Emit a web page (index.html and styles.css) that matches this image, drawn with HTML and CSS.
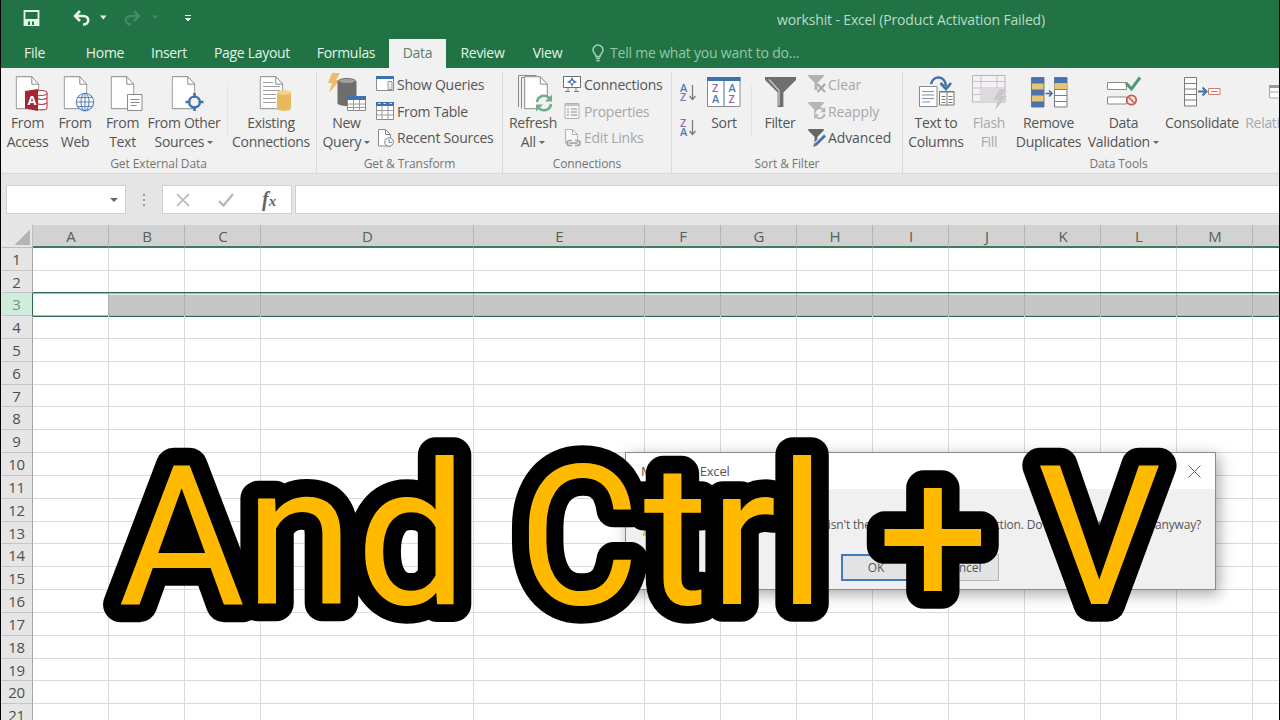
FILE: index.html
```html
<!DOCTYPE html>
<html lang="en">
<head>
    <meta charset="UTF-8">
    <meta name="viewport" content="width=device-width, initial-scale=1.0">
    <title>workshit - Excel</title>
    <link rel="stylesheet" href="styles.css">
</head>
<body>
    <svg class="defs" width="0" height="0">
        <symbol id="page" viewBox="0 0 24 34">
            <path d="M.7.7h15.6l7 7.5v24.500H.7z" fill="#fff" stroke="#8a8a8a"/>
            <path d="M16.300.7v7.500h7" fill="none" stroke="#8a8a8a"/>
        </symbol>
        <symbol id="funnel" viewBox="0 0 32 31">
            <path d="M0 0h32v3L19 16v15h-6V16L0 3z"/>
        </symbol>
        <symbol id="cycle" viewBox="0 0 18 18">
            <path d="M2 8a7 7 0 0 1 12.500-3.500M16 10a7 7 0 0 1-12.500 3.500" fill="none" stroke="currentColor" stroke-width="2.600"/>
            <path d="M17 .5v7h-7zM1 17.500v-7h7z" fill="currentColor"/>
        </symbol>
    </svg>

    <div class="app">
        <div class="titlebar">
            <svg class="quick" width="200" height="38" viewBox="0 0 200 38">
                <path d="M24.500 11h14v14h-14z" fill="none" stroke="#e9f5ec" stroke-width="1.800"/>
                <path d="M25 19h13v6H25z" fill="#e9f5ec"/>
                <path d="M28 21.500h2v3.500h-2zM32 21.500h2v3.500h-2z" fill="#217346"/>
                <path d="M75 16h8c7 0 7 8.500 0 8.500" fill="none" stroke="#e9f5ec" stroke-width="2.600"/>
                <path d="M80 11l-5 5 5 5" fill="none" stroke="#e9f5ec" stroke-width="2.600"/>
                <path d="M100 15.500h6.500l-3.200 4z" fill="#e9f5ec"/>
                <path d="M139 16h-8c-7 0-7 8.500 0 8.500M134 11l5 5-5 5" fill="none" stroke="#448b63" stroke-width="2.400"/>
                <path d="M152 15.500h6l-3 3.500z" fill="#448b63"/>
                <path d="M185 15.500h6M185.500 18.500h5l-2.500 2.500z" fill="#e9f5ec" stroke="#e9f5ec"/>
            </svg>
            <span class="doc-title">workshit - Excel (Product Activation Failed)</span>
        </div>

        <div class="tabs">
            <div class="tab file">File</div>
            <div class="tab home">Home</div>
            <div class="tab insert">Insert</div>
            <div class="tab layout">Page Layout</div>
            <div class="tab formulas">Formulas</div>
            <div class="tab data active">Data</div>
            <div class="tab review">Review</div>
            <div class="tab view">View</div>
            <div class="tell">
                <svg width="12" height="18" viewBox="0 0 12 18" fill="none" stroke="#a5d3b5" stroke-width="1.500">
                    <path d="M4 12.500c0-2.500-3-3.500-3-6.500a5 5 0 0 1 10 0c0 3-3 4-3 6.500zM4 14.500h4M4.500 16.800h3"/>
                </svg>
                <span>Tell me what you want to do...</span>
            </div>
        </div>

        <div class="ribbon">
            <div class="group external">
                <div class="tools">
                    <div class="big access">
                        <svg viewBox="0 0 40 40">
                            <use href="#page" x="7.500" y="4" width="24" height="34"/>
                            <g fill="#fff" stroke="#b7404a" stroke-width="1.100">
                                <path d="M27 21v15c2 2.500 12 2.500 12 0V21"/>
                                <ellipse cx="33" cy="21" rx="6" ry="2.500"/>
                                <path d="M28 26c3 2 8 2 11 0M28 31c3 2 8 2 11 0" fill="none"/>
                            </g>
                            <path d="M17 19l13-2v22l-13-2.500z" fill="#a4262f"/>
                            <text x="19.500" y="32.500" class="access-letter">A</text>
                        </svg>
                        <span>From<br>Access</span>
                    </div>
                    <div class="big web">
                        <svg viewBox="0 0 40 40">
                            <use href="#page" x="8.500" y="4" width="24" height="34"/>
                            <g fill="none" stroke="#5b86b8" stroke-width="1.100">
                                <circle cx="30" cy="30" r="8.700" fill="#fff"/>
                                <ellipse cx="30" cy="30" rx="4" ry="8.700"/>
                                <path d="M21.500 30h17M30 21.500v17M23 25.500h14M23 34.500h14"/>
                            </g>
                        </svg>
                        <span>From<br>Web</span>
                    </div>
                    <div class="big text">
                        <svg viewBox="0 0 40 40">
                            <use href="#page" x="7.500" y="4" width="24" height="34"/>
                            <path d="M24.500 22.500h14.500v16H24.500z" fill="#fff" stroke="#8a8a8a"/>
                            <path d="M27.500 27.500h9M27.500 30.500h9M27.500 33.500h6" stroke="#8a8a8a"/>
                        </svg>
                        <span>From<br>Text</span>
                    </div>
                    <div class="big other">
                        <svg viewBox="0 0 40 40">
                            <use href="#page" x="7.500" y="4" width="24" height="34"/>
                            <circle cx="30.500" cy="30" r="5.500" fill="#f1f1f1" stroke="#3f72ad" stroke-width="2.200"/>
                            <path d="M30.500 21v5M30.500 34v5M21.500 30h5M34.500 30h5" stroke="#3f72ad" stroke-width="2.600"/>
                        </svg>
                        <span>From Other<br>Sources <i class="caret"></i></span>
                    </div>
                    <div class="split"></div>
                    <div class="big existing">
                        <svg viewBox="0 0 40 40">
                            <use href="#page" x="8.500" y="4" width="24" height="34"/>
                            <path d="M12 10.500h10M12 14.500h17M12 18.500h17M12 22.500h13M12 26.500h13M12 30.500h13" stroke="#a0a0a0"/>
                            <path d="M26 20.500v16c0 3 14 3 14 0v-16z" fill="#e6b95c"/>
                            <ellipse cx="33" cy="20.500" rx="7" ry="2.500" fill="#f3d48d"/>
                        </svg>
                        <span>Existing<br>Connections</span>
                    </div>
                </div>
                <div class="caption">Get External Data</div>
            </div>

            <div class="group transform">
                <div class="tools">
                    <div class="big query">
                        <svg viewBox="0 0 40 40">
                            <path d="M5 1h8L9 8h4L2 21l3-10H1z" fill="#eebb6b"/>
                            <path d="M10.500 9v22c0 4 19 4 19 0V9z" fill="#6e6e6e"/>
                            <ellipse cx="20" cy="9" rx="8.500" ry="2.500" fill="#a2a2a2" stroke="#6e6e6e"/>
                            <path d="M20.500 24.500h18v14h-18z" fill="#fff" stroke="#8a8a8a"/>
                            <path d="M20 24h19v4H20z" fill="#3f72ad"/>
                            <path d="M20.500 32h18M20.500 35.500h18M26.500 28v10.500M32.500 28v10.500" stroke="#9a9a9a"/>
                        </svg>
                        <span>New<br>Query <i class="caret"></i></span>
                    </div>
                    <div class="list">
                        <div class="small">
                            <svg viewBox="0 0 18 18">
                                <path d="M.5 1.500h17v14H.5z" fill="#fff" stroke="#8a8a8a"/>
                                <path d="M0 1h18v3H0z" fill="#3f72ad"/>
                                <path d="M12 6.500h4v8h-4z" fill="#ececec" stroke="#9a9a9a"/>
                            </svg>
                            <span>Show Queries</span>
                        </div>
                        <div class="small">
                            <svg viewBox="0 0 18 18">
                                <path d="M.5.5h17v17H.5z" fill="#fff" stroke="#8a8a8a"/>
                                <path d="M0 0h18v4H0z" fill="#3f72ad"/>
                                <path d="M.5 8.500h17M.5 13h17M6 4v13.500M12 4v13.500" stroke="#9a9a9a"/>
                                <path d="M2 1.500h2.500M7.500 1.500H10M13.500 1.500H16" stroke="#cfe0f2"/>
                            </svg>
                            <span>From Table</span>
                        </div>
                        <div class="small">
                            <svg viewBox="0 0 18 18">
                                <path d="M2.500.5h7l5 5V17h-12z" fill="#fff" stroke="#8a8a8a"/>
                                <path d="M9.500.5v5h5" fill="none" stroke="#8a8a8a"/>
                                <circle cx="13" cy="13" r="4.300" fill="#fff" stroke="#7b8796"/>
                                <path d="M13 10v3.500h3" fill="none" stroke="#7b8796"/>
                            </svg>
                            <span>Recent Sources</span>
                        </div>
                    </div>
                </div>
                <div class="caption">Get &amp; Transform</div>
            </div>

            <div class="group connections">
                <div class="tools">
                    <div class="big refresh">
                        <svg viewBox="0 0 40 40">
                            <path d="M5.500 35V3.500h18M8.500 36.500V5.500h16" fill="none" stroke="#8a8a8a"/>
                            <use href="#page" x="11" y="4" width="24" height="34"/>
                            <circle cx="31" cy="31" r="8" fill="#f1f1f1"/>
                            <use href="#cycle" x="22" y="22" width="18" height="18" color="#74ac91"/>
                        </svg>
                        <span>Refresh<br>All <i class="caret"></i></span>
                    </div>
                    <div class="list">
                        <div class="small">
                            <svg viewBox="0 0 18 18">
                                <path d="M.5 1.500h17v11H.5z" fill="#fff" stroke="#6f6f6f"/>
                                <path d="M2 16.500h5M11 16.500h5M5 12.500v4M13 12.500v4" stroke="#7f7f7f"/>
                                <path d="M9 2l1.500 3L14 7l-3.500 1.500L9 12 7.500 8.500 4 7l3.500-2z" fill="#3f72ad"/>
                                <circle cx="9" cy="7" r="1.500" fill="#fff"/>
                            </svg>
                            <span>Connections</span>
                        </div>
                        <div class="small off">
                            <svg viewBox="0 0 18 18">
                                <path d="M2 1.500h14v15H2z" fill="#f6f6f6" stroke="#b3b3b3"/>
                                <path d="M2 3h14M4 7h2M8 7h6M4 10h2M8 10h6M4 13h2M8 13h6" stroke="#b3b3b3" stroke-width="1.500"/>
                            </svg>
                            <span>Properties</span>
                        </div>
                        <div class="small off">
                            <svg viewBox="0 0 18 18">
                                <path d="M2.500.5h7l5 5V14h-12z" fill="#f8f8f8" stroke="#b3b3b3"/>
                                <path d="M9.500.5v5h5" fill="none" stroke="#b3b3b3"/>
                                <path d="M9 11.500H6.500a2.300 2.300 0 0 0 0 5H9M12 11.500h2.500a2.300 2.300 0 0 1 0 5H12M7 14h7" fill="none" stroke="#a5a5a5" stroke-width="1.700"/>
                            </svg>
                            <span>Edit Links</span>
                        </div>
                    </div>
                </div>
                <div class="caption">Connections</div>
            </div>

            <div class="group sorting">
                <div class="tools">
                    <div class="orders">
                        <svg viewBox="0 0 16 20">
                            <text x="0" y="9" class="az blue">A</text>
                            <text x="0" y="18" class="az purple">Z</text>
                            <path d="M12.500 2v14M9.500 13l3 3.500 3-3.500" fill="none" stroke="#777" stroke-width="1.200"/>
                        </svg>
                        <svg viewBox="0 0 16 20">
                            <text x="0" y="9" class="az purple">Z</text>
                            <text x="0" y="18" class="az blue">A</text>
                            <path d="M12.500 2v14M9.500 13l3 3.500 3-3.500" fill="none" stroke="#777" stroke-width="1.200"/>
                        </svg>
                    </div>
                    <div class="big sort">
                        <svg viewBox="0 0 40 40">
                            <path d="M3.500 5.500h32.500v29H3.500z" fill="#fff" stroke="#8a8a8a"/>
                            <path d="M3 5h33.500v4H3zM19.500 9h1v25h-1z" fill="#3f72ad"/>
                            <text x="8" y="20" class="az purple">Z</text>
                            <text x="8" y="31" class="az blue">A</text>
                            <text x="24.500" y="20" class="az blue">A</text>
                            <text x="24.500" y="31" class="az purple">Z</text>
                        </svg>
                        <span>Sort</span>
                    </div>
                    <div class="split"></div>
                    <div class="big filter">
                        <svg viewBox="0 0 40 40">
                            <use href="#funnel" x="5" y="5" width="31" height="30" fill="#6f6f6f"/>
                            <path d="M9 7.500l10 11v15" fill="none" stroke="#c9c9c9" stroke-width="1.300"/>
                        </svg>
                        <span>Filter</span>
                    </div>
                    <div class="list">
                        <div class="small off">
                            <svg viewBox="0 0 18 18">
                                <use href="#funnel" x="0" y="0" width="16" height="15" fill="#b3b3b3"/>
                                <path d="M9.500 9l7.500 8M17 9l-7.500 8" stroke="#a5a5a5" stroke-width="2"/>
                            </svg>
                            <span>Clear</span>
                        </div>
                        <div class="small off">
                            <svg viewBox="0 0 18 18">
                                <use href="#funnel" x="0" y="0" width="16" height="15" fill="#b9b4b9"/>
                                <circle cx="12" cy="12" r="5" fill="#f1f1f1"/>
                                <use href="#cycle" x="5.500" y="5" width="12.500" height="12.500" color="#b3b3b3"/>
                            </svg>
                            <span>Reapply</span>
                        </div>
                        <div class="small">
                            <svg viewBox="0 0 18 18">
                                <use href="#funnel" x="0" y="0" width="16" height="15" fill="#666"/>
                                <path d="M17 6l-9 9" stroke="#f1f1f1" stroke-width="4.500"/>
                                <path d="M17 6.500l-9 9" stroke="#3f72ad" stroke-width="2.600"/>
                                <path d="M5 18l1.500-4 2.500 2.500z" fill="#666"/>
                            </svg>
                            <span>Advanced</span>
                        </div>
                    </div>
                </div>
                <div class="caption">Sort &amp; Filter</div>
            </div>

            <div class="group datatools">
                <div class="tools">
                    <div class="big columns">
                        <svg viewBox="0 0 40 40">
                            <path d="M15 12c2-9 14-9 15 2" fill="none" stroke="#3f72ad" stroke-width="2.600"/>
                            <path d="M24.500 11l5.500 6 5-6" fill="none" stroke="#3f72ad" stroke-width="2.600"/>
                            <path d="M3.500 14.500H21v20H3.500z" fill="#fff" stroke="#8a8a8a"/>
                            <path d="M6 19.500h12M6 23h12M6 26.500h12M6 30h8" stroke="#7c93b0"/>
                            <path d="M23.500 19.500H38v13.500H23.500z" fill="#fff" stroke="#777"/>
                            <path d="M23.500 20h14.500M25.500 24.500h4M32.500 24.500h4M25.500 27.500h4M32.500 27.500h4M25.500 30.500h4M32.500 30.500h4M31 20v13" stroke="#777"/>
                        </svg>
                        <span>Text to<br>Columns</span>
                    </div>
                    <div class="big flash off">
                        <svg viewBox="0 0 40 40">
                            <path d="M3.500 3.500h32.500v26.500H3.500z" fill="#f4f1f4" stroke="#b9b6b9"/>
                            <path d="M3.500 9.500H36M3.500 16H36M3.500 22.500H36M12 3.500V30M28 3.500V22" stroke="#c6c2c6"/>
                            <path d="M12 16h20v14H12z" fill="#ddd9dd"/>
                            <path d="M31 17h6l-4 7h5L26 38l3-10h-5z" fill="#cbc6cb"/>
                        </svg>
                        <span>Flash<br>Fill</span>
                    </div>
                    <div class="big remove">
                        <svg viewBox="0 0 40 40">
                            <path d="M2.500 5.500h12.500v29.500H2.500z" fill="#e7c574" stroke="#7d7d7d"/>
                            <path d="M2.500 5.500H15v6H2.500zM2.500 17.500H15v6H2.500zM2.500 29.500H15v5.500H2.500z" fill="#4a72ad"/>
                            <path d="M25.500 5.500H38v29.500H25.500z" fill="#fff" stroke="#7d7d7d"/>
                            <path d="M25.500 5.500H38v6H25.500z" fill="#4a72ad"/>
                            <path d="M25.500 11.500H38v6H25.500z" fill="#e7c574"/>
                            <path d="M25.500 17.500H38M25.500 23.500H38M25.500 29.500H38" stroke="#7d7d7d"/>
                            <path d="M16.500 21.500h6M20 18.500l3 3-3 3" fill="none" stroke="#3f72ad" stroke-width="1.600"/>
                        </svg>
                        <span>Remove<br>Duplicates</span>
                    </div>
                    <div class="big validation">
                        <svg viewBox="0 0 40 40">
                            <path d="M3.500 10.500h19v7h-19zM3.500 25h19v7h-19z" fill="#fff" stroke="#8a8a8a"/>
                            <path d="M22 11l5.500 6L36 5.500" fill="none" stroke="#4f9a76" stroke-width="3"/>
                            <circle cx="27.500" cy="28" r="4.700" fill="#f8e9e7" stroke="#cf5a4e" stroke-width="1.700"/>
                            <path d="M24.500 25l6.500 6.500" stroke="#cf5a4e" stroke-width="1.700"/>
                        </svg>
                        <span>Data<br>Validation <i class="caret"></i></span>
                    </div>
                    <div class="big consolidate">
                        <svg viewBox="0 0 40 40">
                            <path d="M2.500 5.500H14.500v28.500H2.500zM2.500 11.500h12M2.500 17h12M2.500 22.500h12M2.500 28h12" fill="#fff" stroke="#7d7d7d"/>
                            <path d="M16 19.500h8M20.500 15.500l4 4-4 4" fill="none" stroke="#3f72ad" stroke-width="2"/>
                            <path d="M26.500 16.500H38v6H26.500zM29 19.500h6.500" fill="#fff" stroke="#d8776e"/>
                        </svg>
                        <span>Consolidate</span>
                    </div>
                    <div class="big relations off">
                        <svg viewBox="0 0 40 40">
                            <path d="M2.500 13.500h14V26H2.500zM2.500 20h14" fill="#fafafa" stroke="#aaa"/>
                            <path d="M2 13h15v3H2z" fill="#999"/>
                        </svg>
                        <span>Relationships</span>
                    </div>
                </div>
                <div class="caption">Data Tools</div>
            </div>
        </div>

        <div class="formula-bar">
            <div class="name-box"><i class="caret"></i></div>
            <div class="dots"><i></i><i></i><i></i></div>
            <div class="fx-box">
                <svg width="14" height="14" viewBox="0 0 14 14"><path d="M1 1l12 12M13 1L1 13" stroke="#b5b5b5" stroke-width="1.700"/></svg>
                <svg width="16" height="14" viewBox="0 0 16 14"><path d="M1 8l4.500 4.500L15 1" fill="none" stroke="#b5b5b5" stroke-width="2.200"/></svg>
                <span class="fx">f<small>x</small></span>
            </div>
            <div class="input"></div>
        </div>

        <div class="sheet" id="sheet"></div>
    </div>

    <div class="dialog">
        <div class="dialog-title">
            <span>Microsoft Excel</span>
            <svg width="13" height="13" viewBox="0 0 13 13"><path d="M.5.5l12 12M12.500.5l-12 12" stroke="#666"/></svg>
        </div>
        <div class="dialog-body">
            <div class="message">
                <svg width="26" height="24" viewBox="0 0 26 24">
                    <path d="M13 1l12 22H1z" fill="#f7d64a" stroke="#c9a62a"/>
                    <path d="M13 8v8M13 18v2.500" stroke="#333" stroke-width="2"/>
                </svg>
                <span>The data you're pasting isn't the same size as your selection. Do you want to paste it anyway?</span>
            </div>
            <div class="buttons">
                <div class="button ok">OK</div>
                <div class="button">Cancel</div>
            </div>
        </div>
    </div>

    <!-- outline goes under all the letters, so the words are drawn twice -->
    <svg class="subtitle" width="1280" height="720" viewBox="0 0 1280 720">
        <g class="outline">
            <g id="words">
                <text x="118" y="603.700" class="cap">A</text>
                <text x="244.500 356" y="603.700">nd</text>
                <text x="518" y="603.700" class="cap" textLength="121.500" lengthAdjust="spacingAndGlyphs">C</text>
                <text x="643.500 709.500 778" y="603.700">trl</text>
                <text x="877" y="604.500">+</text>
                <text x="1037.300" y="603.700" class="cap">V</text>
            </g>
        </g>
        <use href="#words"/>
    </svg>

    <script>
        const columns = ["A", "B", "C", "D", "E", "F", "G", "H", "I", "J", "K", "L", "M", ""];
        const sheet = document.getElementById("sheet");

        function addCell(text, className) {
            let cell = document.createElement("div");
            cell.className = className;
            cell.innerText = text;
            sheet.appendChild(cell);
        }

        addCell("", "corner");
        columns.forEach(name => addCell(name, "col-head"));

        for (let row = 1; row <= 21; row++) {
            let selected = row === 3 ? " selected" : "";
            addCell(row, "row-head" + selected);
            columns.forEach(name => addCell("", "cell" + selected + (name === "A" ? " first" : "")));
        }
    </script>
</body>
</html>
```
FILE: styles.css
```css
* {
    box-sizing: border-box;
}
body {
    margin: 0;
    width: 1280px;
    height: 720px;
    overflow: hidden;
    position: relative;
    background-color: #000;
    font-family: "Open Sans", "Noto Sans", sans-serif;
    font-size: 14px;
    color: #555;
}
.defs {
    position: absolute;
}
.app {
    width: 1278px;
    height: 720px;
    margin: 0 1px;
    overflow: hidden;
    background-color: #e6e6e6;
}

/* title bar and tabs */
.titlebar {
    height: 39px;
    display: flex;
    background-color: #217346;
}
.quick {
    margin-left: -1px;
}
.doc-title {
    margin-left: 577px;
    line-height: 39px;
    font-size: 14px;
    letter-spacing: -0.150px;
    color: #b9dcc5;
    white-space: nowrap;
}
.tabs {
    height: 29px;
    display: flex;
    background-color: #217346;
    color: #e4f3e8;
}
.tab {
    line-height: 27px;
    text-align: center;
    letter-spacing: -0.300px;
    white-space: nowrap;
}
.file { width: 67px; margin-right: 5px; }
.home { width: 64px; }
.insert { width: 64px; }
.layout { width: 102px; }
.formulas { width: 86px; }
.data { width: 57px; }
.review { width: 73px; }
.view { width: 57px; }
.tab.active {
    background-color: #f1f1f1;
    color: #5c7f6b;
}
.tell {
    display: flex;
    align-items: center;
    gap: 6px;
    height: 27px;
    margin-left: 16px;
    letter-spacing: -0.200px;
    color: #93c8a7;
    white-space: nowrap;
}

/* ribbon */
.ribbon {
    height: 106px;
    display: flex;
    background-color: #f1f1f1;
    border-bottom: 1px solid #d8d8d8;
}
.group {
    flex: none;
    height: 101px;
    margin-top: 4px;
    border-right: 1px solid #dadada;
}
.external { width: 316px; }
.transform { width: 186px; }
.connections { width: 169px; }
.sorting { width: 231px; }
.datatools { width: 432px; }
.tools {
    height: 82px;
    display: flex;
}
.external .tools { padding-left: 3px; }
.datatools .tools { padding-left: 4px; }
.caption {
    font-size: 12px;
    line-height: 20px;
    text-align: center;
    letter-spacing: -0.100px;
    color: #757575;
}
.big {
    flex: none;
    display: flex;
    flex-direction: column;
    align-items: center;
    text-align: center;
    line-height: 19px;
    letter-spacing: -0.300px;
    white-space: nowrap;
}
.big svg {
    width: 40px;
    height: 40px;
    margin-bottom: 1px;
}
.access { width: 47px; }
.web { width: 48px; }
.text { width: 47px; }
.other { width: 76px; }
.existing { width: 84px; }
.query { width: 59px; }
.refresh { width: 60px; }
.sort { width: 52px; }
.filter { width: 56px; }
.columns { width: 58px; }
.flash { width: 48px; }
.remove { width: 71px; }
.validation { width: 79px; }
.consolidate { width: 78px; }
.relations { width: 92px; }
.off {
    color: #a8a8a8;
}
.split {
    width: 1px;
    height: 50px;
    margin: 14px 1px 0 5px;
    background-color: #e2e2e2;
}
.sort + .split {
    margin: 14px 0 0 1px;
}
.caret {
    display: inline-block;
    border: 3px solid transparent;
    border-top: 3px solid #666;
    border-bottom: none;
    vertical-align: 3px;
}
.access-letter {
    font: bold 13px "Open Sans", sans-serif;
    fill: #fff;
}
.az {
    font: 600 11px "Open Sans", sans-serif;
}
.blue { fill: #4a7fb5; }
.purple { fill: #9268a6; }
.list {
    display: flex;
    flex-direction: column;
    margin-top: -1px;
}
.small {
    height: 26.700px;
    display: flex;
    align-items: center;
    gap: 3px;
    letter-spacing: -0.250px;
    white-space: nowrap;
}
.small svg {
    width: 18px;
    height: 18px;
}
.orders {
    width: 26px;
    display: flex;
    flex-direction: column;
    gap: 15px;
    padding: 11px 0 0 8px;
}
.orders svg {
    width: 16px;
    height: 20px;
}
.filter + .list .small {
    gap: 2px;
    letter-spacing: -0.100px;
}

/* formula bar */
.formula-bar {
    height: 51px;
    display: flex;
    padding: 11px 0 11px 5px;
}
.name-box, .fx-box, .input {
    height: 29px;
    background-color: #fff;
    border: 1px solid #cfcfcf;
}
.name-box {
    width: 120px;
    display: flex;
    justify-content: flex-end;
    align-items: center;
    padding-right: 7px;
}
.name-box .caret {
    border-width: 4px 4px 0;
}
.dots {
    width: 36px;
    height: 29px;
    display: flex;
    flex-direction: column;
    align-items: center;
    justify-content: center;
    gap: 3px;
}
.dots i {
    width: 2px;
    height: 2px;
    background-color: #999;
}
.fx-box {
    width: 130px;
    display: flex;
    align-items: center;
    padding-left: 13px;
}
.fx-box svg + svg {
    margin-left: 28px;
}
.fx {
    margin-left: 28px;
    font: italic bold 20px "Liberation Serif", serif;
    line-height: 24px;
    color: #666;
}
.fx small {
    font-size: 15px;
}
.input {
    flex: 1;
    margin-left: 3px;
    border-right: none;
}

/* sheet */
.sheet {
    width: 1329px;
    display: grid;
    grid-template-columns: 32px 76px 76px 76px 213px 171px repeat(9, 76px);
    grid-template-rows: 22.700px;
    grid-auto-rows: 22.840px;
    background-color: #fff;
}
.corner {
    background: linear-gradient(135deg, #e6e6e6 50%, #b5b5b5 50%) 14px 5px / 15px 15px no-repeat #e6e6e6;
    border-right: 1px solid #bdbdbd;
    border-bottom: 1px solid #bdbdbd;
}
.col-head {
    background-color: #d2d2d2;
    border-right: 1px solid #b5b5b5;
    border-bottom: 2px solid #3d7b5b;
    padding-left: 1px;
    font-size: 15px;
    line-height: 23px;
    text-align: center;
    color: #55605a;
}
.row-head {
    background-color: #e6e6e6;
    border-right: 1px solid #a5a5a5;
    border-bottom: 1px solid #c6c6c6;
    font-size: 15px;
    line-height: 22.500px;
    text-align: center;
    letter-spacing: -0.300px;
    color: #4f4f4f;
}
.row-head.selected {
    background-color: #d0ecdc;
    color: #5d9a7b;
}
.cell {
    border-right: 1px solid #dadada;
    border-bottom: 1px solid #dadada;
}
.cell.selected {
    background-color: #c6c6c6;
    border-right-color: #b0b0b0;
    border-bottom: none;
    box-shadow: 0 -1px #2d6b4c, 0 1px #2d6b4c, inset 0 1px #9cc4af, inset 0 2px #e0f0e6, inset 0 -1px #9cc4af;
}
.cell.first.selected {
    background-color: #fff;
    box-shadow: 0 -1px #2d6b4c, 0 1px #2d6b4c, -1px 0 #2d6b4c, inset 0 1px #9cc4af, inset 0 -1px #9cc4af;
}

/* message box */
.dialog {
    position: absolute;
    left: 625px;
    top: 452px;
    width: 591px;
    height: 138px;
    background-color: #f0f0f0;
    border: 1px solid #8a8a8a;
    box-shadow: 3px 4px 14px rgba(0, 0, 0, 0.350);
    font-size: 12px;
}
.dialog-title {
    height: 36px;
    display: flex;
    align-items: center;
    justify-content: space-between;
    padding: 0 14px 0 15px;
    background-color: #fff;
    font-size: 13px;
    letter-spacing: -0.200px;
}
.message {
    display: flex;
    align-items: center;
    justify-content: space-between;
    height: 24px;
    margin: 23px 14px 0 16px;
    letter-spacing: -0.170px;
    white-space: nowrap;
}
.buttons {
    display: flex;
    gap: 14px;
    margin: 18px 0 0 215px;
}
.button {
    width: 72px;
    height: 27px;
    border: 1px solid #b5b5b5;
    background-color: #e3e3e3;
    line-height: 25px;
    text-align: center;
}
.button.ok {
    border: 2px solid #3f7cc0;
    line-height: 23px;
    text-indent: -2px;
}

/* video caption */
.subtitle {
    position: absolute;
    left: 0;
    top: 0;
    font-family: Roboto, sans-serif;
    font-size: 198px;
    font-weight: 450;
    fill: #ffba00;
}
.subtitle .cap {
    font-size: 195px;
}
.outline {
    stroke: #000;
    stroke-width: 35.500px;
    stroke-linejoin: round;
}
```
